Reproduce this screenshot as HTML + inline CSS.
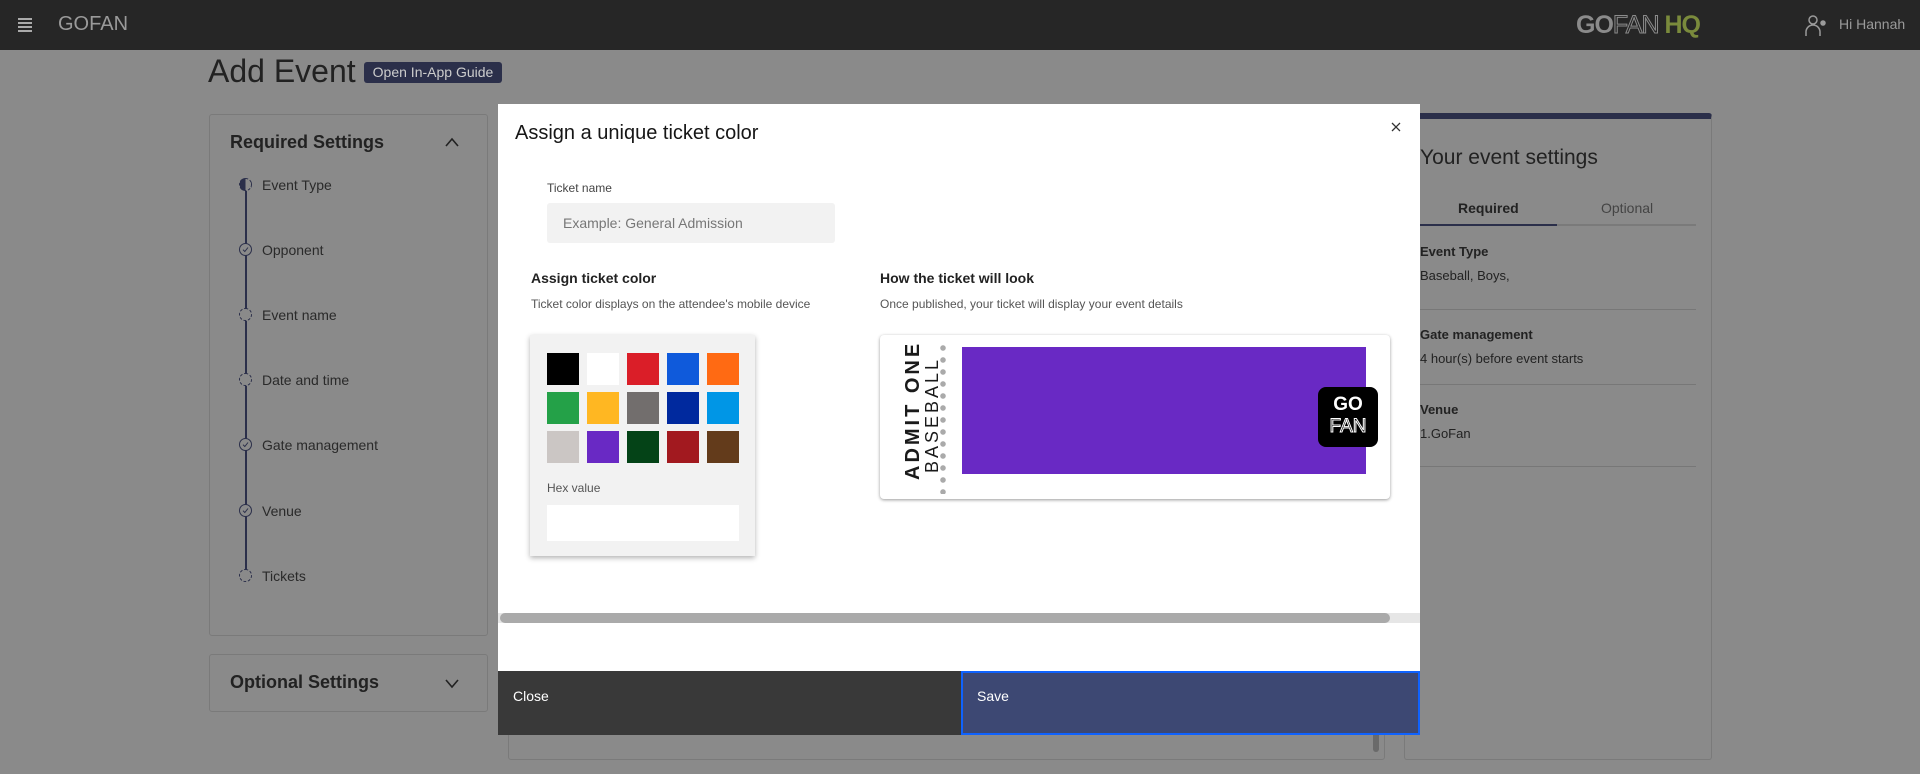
<!DOCTYPE html>
<html><head><meta charset="utf-8"><style>
*{box-sizing:border-box;margin:0;padding:0}
body{width:1920px;height:774px;overflow:hidden;background:#8a8a8a;font-family:"Liberation Sans",sans-serif;position:relative;color:#1a1a1a}
.a{position:absolute}
.hdr{left:0;top:0;width:1920px;height:50px;background:#262626}
.step{left:262px;font-size:14px;color:#2a2a2a}
.circ{left:239px;width:13px;height:13px;border:1px dashed #2b2f4a;border-radius:50%;background:#8a8a8a}
.sw{width:32px;height:32px}
.rt{font-size:13px;color:#222}
</style></head><body>
<div class="a hdr"></div>
<div class="a" style="left:18px;top:18px;width:14px">
<div style="height:2px;background:#aaa;margin-bottom:2px"></div><div style="height:2px;background:#aaa;margin-bottom:2px"></div><div style="height:2px;background:#aaa;margin-bottom:2px"></div><div style="height:2px;background:#aaa"></div></div>
<div class="a" style="left:58px;top:13px;font-size:20px;color:#9a9a9a">GOFAN</div>
<div class="a" style="left:1576px;top:11px;font-size:25px;font-weight:bold;color:#8b8b8b;letter-spacing:-1px">GO<span style="font-weight:normal;-webkit-text-stroke:1px #8b8b8b;color:transparent">FAN</span> <span style="color:#7a8a3c">HQ</span></div>
<svg class="a" style="left:1804px;top:13px" width="24" height="24" viewBox="0 0 24 24" fill="none" stroke="#9a9a9a" stroke-width="1.5"><circle cx="9" cy="7" r="4"/><path d="M2 23v-4a7 7 0 0 1 14 0v4"/><circle cx="19" cy="10" r="2" fill="#9a9a9a"/></svg>
<div class="a" style="left:1839px;top:16px;font-size:14px;color:#9a9a9a">Hi Hannah</div>

<div class="a" style="left:208px;top:53px;font-size:32px;color:#222">Add Event</div>
<div class="a" style="left:364px;top:62px;width:138px;height:21px;background:#2b2f4a;border-radius:3px;color:#ccc;font-size:14px;line-height:21px;text-align:center">Open In-App Guide</div>

<div class="a" style="left:209px;top:114px;width:279px;height:522px;border:1px solid #7a7a7a;border-radius:3px"></div>
<div class="a" style="left:230px;top:132px;font-size:18px;font-weight:bold;color:#222">Required Settings</div>
<svg class="a" style="left:444px;top:136px" width="16" height="12" viewBox="0 0 16 12" fill="none" stroke="#222" stroke-width="1.6"><path d="M2 10 8 3l6 7"/></svg>
<div class="a" style="left:245px;top:185px;width:1.5px;height:392px;background:#2b2f4a"></div>
<div class="a circ" style="top:178px;background:linear-gradient(90deg,#2b2f4a 50%,#8a8a8a 50%)"></div>
<div class="a step" style="top:177px">Event Type</div>
<svg class="a" style="left:239px;top:243px" width="13" height="13" viewBox="0 0 13 13" fill="#8a8a8a" stroke="#2b2f4a"><circle cx="6.5" cy="6.5" r="6"/><path d="M4 6.7l1.8 1.8L9 4.5" fill="none"/></svg><div class="a step" style="top:242px">Opponent</div>
<div class="a circ" style="top:308px"></div><div class="a step" style="top:307px">Event name</div>
<div class="a circ" style="top:373px"></div><div class="a step" style="top:372px">Date and time</div>
<svg class="a" style="left:239px;top:438px" width="13" height="13" viewBox="0 0 13 13" fill="#8a8a8a" stroke="#2b2f4a"><circle cx="6.5" cy="6.5" r="6"/><path d="M4 6.7l1.8 1.8L9 4.5" fill="none"/></svg><div class="a step" style="top:437px">Gate management</div>
<svg class="a" style="left:239px;top:504px" width="13" height="13" viewBox="0 0 13 13" fill="#8a8a8a" stroke="#2b2f4a"><circle cx="6.5" cy="6.5" r="6"/><path d="M4 6.7l1.8 1.8L9 4.5" fill="none"/></svg><div class="a step" style="top:503px">Venue</div>
<div class="a circ" style="top:569px"></div><div class="a step" style="top:568px">Tickets</div>

<div class="a" style="left:209px;top:654px;width:279px;height:58px;border:1px solid #7a7a7a;border-radius:3px"></div>
<div class="a" style="left:230px;top:672px;font-size:18px;font-weight:bold;color:#222">Optional Settings</div>
<svg class="a" style="left:444px;top:677px" width="16" height="12" viewBox="0 0 16 12" fill="none" stroke="#222" stroke-width="1.6"><path d="M2 3l6 7 6-7"/></svg>

<div class="a" style="left:508px;top:700px;width:877px;height:60px;border:1px solid #7a7a7a;border-radius:3px"></div>
<div class="a" style="left:1373px;top:720px;width:6px;height:32px;background:#6a6a6a;border-radius:3px"></div>

<div class="a" style="left:1404px;top:113px;width:308px;height:647px;border:1px solid #7a7a7a;border-top:6px solid #2b2f4a;border-radius:3px"></div>
<div class="a" style="left:1420px;top:146px;font-size:21px;color:#222">Your event settings</div>
<div class="a" style="left:1458px;top:200px;font-size:14px;font-weight:bold;color:#222">Required</div>
<div class="a" style="left:1601px;top:200px;font-size:14px;color:#444">Optional</div>
<div class="a" style="left:1420px;top:224px;width:276px;height:2px;background:#7a7a7a"></div>
<div class="a" style="left:1420px;top:224px;width:137px;height:2px;background:#2b2f4a"></div>
<div class="a rt" style="left:1420px;top:244px;font-weight:bold">Event Type</div>
<div class="a rt" style="left:1420px;top:268px">Baseball, Boys,</div>
<div class="a" style="left:1420px;top:309px;width:276px;height:1px;background:#777"></div>
<div class="a rt" style="left:1420px;top:327px;font-weight:bold">Gate management</div>
<div class="a rt" style="left:1420px;top:351px">4 hour(s) before event starts</div>
<div class="a" style="left:1420px;top:384px;width:276px;height:1px;background:#777"></div>
<div class="a rt" style="left:1420px;top:402px;font-weight:bold">Venue</div>
<div class="a rt" style="left:1420px;top:426px">1.GoFan</div>
<div class="a" style="left:1420px;top:466px;width:276px;height:1px;background:#777"></div>

<div class="a" style="left:498px;top:104px;width:922px;height:631px;background:#fff"></div>
<div class="a" style="left:515px;top:122px;font-size:20px;color:#161616">Assign a unique ticket color</div>
<svg class="a" style="left:1390px;top:121px" width="12" height="12" viewBox="0 0 12 12" stroke="#333" stroke-width="1.3"><path d="M2 2l8 8M10 2l-8 8"/></svg>
<div class="a" style="left:547px;top:181px;font-size:12px;color:#444">Ticket name</div>
<div class="a" style="left:547px;top:203px;width:288px;height:40px;background:#f2f2f2;border-radius:3px;font-size:14px;color:#777;padding:12px 16px">Example: General Admission</div>
<div class="a" style="left:531px;top:270px;font-size:14px;font-weight:bold;color:#222">Assign ticket color</div>
<div class="a" style="left:531px;top:297px;font-size:12px;color:#555">Ticket color displays on the attendee's mobile device</div>
<div class="a" style="left:880px;top:270px;font-size:14px;font-weight:bold;color:#222">How the ticket will look</div>
<div class="a" style="left:880px;top:297px;font-size:12px;color:#555">Once published, your ticket will display your event details</div>

<div class="a" style="left:530px;top:335px;width:225px;height:221px;background:#f2f2f2;box-shadow:0 2px 5px rgba(0,0,0,.3)"></div>
<div class="a sw" style="left:547px;top:353px;background:#000"></div>
<div class="a sw" style="left:587px;top:353px;background:#fff"></div>
<div class="a sw" style="left:627px;top:353px;background:#da1e28"></div>
<div class="a sw" style="left:667px;top:353px;background:#0f5adb"></div>
<div class="a sw" style="left:707px;top:353px;background:#ff6a13"></div>
<div class="a sw" style="left:547px;top:392px;background:#24a148"></div>
<div class="a sw" style="left:587px;top:392px;background:#ffb722"></div>
<div class="a sw" style="left:627px;top:392px;background:#726e6d"></div>
<div class="a sw" style="left:667px;top:392px;background:#00299e"></div>
<div class="a sw" style="left:707px;top:392px;background:#0096e6"></div>
<div class="a sw" style="left:547px;top:431px;background:#cbc6c4"></div>
<div class="a sw" style="left:587px;top:431px;background:#6929c4"></div>
<div class="a sw" style="left:627px;top:431px;background:#044317"></div>
<div class="a sw" style="left:667px;top:431px;background:#a2191f"></div>
<div class="a sw" style="left:707px;top:431px;background:#633b1b"></div>
<div class="a" style="left:547px;top:481px;font-size:12px;color:#555">Hex value</div>
<div class="a" style="left:547px;top:505px;width:192px;height:36px;background:#fff"></div>

<div class="a" style="left:880px;top:335px;width:510px;height:164px;background:#fff;border-radius:4px;box-shadow:0 1px 3px rgba(0,0,0,.4)"></div>
<div class="a" style="left:939px;top:342px;width:8px;height:152px;background:radial-gradient(circle,#aaa 2.5px,transparent 3px) 0 0/8px 12px"></div>
<div class="a" style="left:962px;top:347px;width:404px;height:127px;background:#6929c4"></div>
<div class="a" style="left:902px;top:480px;transform:rotate(-90deg);transform-origin:0 0;font-size:20px;font-weight:bold;letter-spacing:3px;white-space:nowrap;line-height:22px">ADMIT  ONE</div>
<div class="a" style="left:922px;top:473px;transform:rotate(-90deg);transform-origin:0 0;font-size:18px;letter-spacing:3px;white-space:nowrap;line-height:20px">BASEBALL</div>
<div class="a" style="left:1318px;top:387px;width:60px;height:60px;background:#000;border-radius:8px;color:#fff;font-weight:bold;font-size:19px;line-height:22px;padding:7px 4px;text-align:center">GO<br><span style="font-weight:normal;-webkit-text-stroke:1px #fff;color:#000">FAN</span></div>

<div class="a" style="left:498px;top:613px;width:922px;height:10px;background:#e6e6e6"></div>
<div class="a" style="left:500px;top:613px;width:890px;height:10px;background:#aaa;border-radius:5px"></div>

<div class="a" style="left:498px;top:671px;width:463px;height:64px;background:#393939;color:#fff;font-size:14px;padding:17px 15px">Close</div>
<div class="a" style="left:961px;top:671px;width:459px;height:64px;background:#3d4873;border:2px solid #0f62fe;color:#fff;font-size:14px;padding:15px 14px">Save</div>
</body></html>
